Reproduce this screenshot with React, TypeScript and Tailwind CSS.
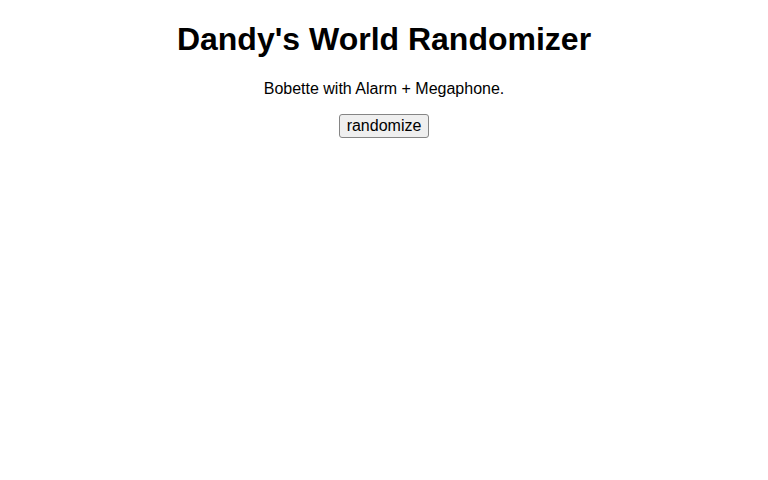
import React, { useState } from 'react';

const characters = ['Bobette', 'Astro', 'Boxten', 'Poppy', 'Shrimpo', 'Vee', 'Sprout', 'Pebble'];
const items = ['Alarm', 'Megaphone', 'Bandage', 'Jumper Cable', 'Chocolate', 'Speed Candy', 'Box of Chocolates'];

function pick<T>(list: T[]): T {
  return list[Math.floor(Math.random() * list.length)];
}

export default function App() {
  const [result, setResult] = useState('Bobette with Alarm + Megaphone.');

  const handleRandomize = () => {
    const first = pick(items);
    let second = pick(items);
    while (second === first) second = pick(items);
    setResult(`${pick(characters)} with ${first} + ${second}.`);
  };

  return (
    <div className="min-h-[480px] bg-white text-black text-center font-['Liberation_Sans',Arial,sans-serif] text-[16px] pt-[21px]">
      <h1 className="text-[32px] font-bold leading-[37px]">Dandy's World Randomizer</h1>
      <p className="mt-[22px] leading-[18px]">{result}</p>
      <p className="mt-[16px]">
        <button
          onClick={handleRandomize}
          className="bg-[#efefef] border border-[#858585] rounded-[3px] px-[7px] py-[2px] leading-[18px] text-[16px] hover:bg-[#e5e5e5]"
        >
          randomize
        </button>
      </p>
    </div>
  );
}
